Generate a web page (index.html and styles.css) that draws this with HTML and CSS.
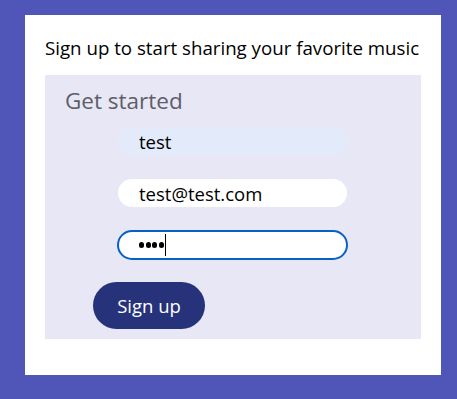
FILE: index.html
```html
<!DOCTYPE html>
<html>
<head>
<meta charset="utf-8">
<link rel="stylesheet" href="styles.css">
</head>
<body>
<div class="card">
  <p class="intro">Sign up to start sharing your favorite music</p>
  <form class="panel">
    <h2 class="title">Get started</h2>
    <div class="fields">
      <input class="field autofill" type="text" value="test">
      <input class="field" type="email" value="test@test.com">
      <div class="field focus"><span class="dot"></span><span class="dot"></span><span class="dot"></span><span class="dot"></span><span class="caret"></span></div>
    </div>
    <button class="btn" type="button">Sign up</button>
  </form>
</div>
</body>
</html>
```
FILE: styles.css
```css
html, body {
  margin: 0;
  padding: 0;
}
body {
  background: #5055b8;
  width: 457px;
  height: 399px;
  overflow: hidden;
  font-family: "Open Sans", "Noto Sans", sans-serif;
}
.card {
  background: #ffffff;
  margin: 15px 0 0 25px;
  width: 416px;
  height: 360px;
  box-sizing: border-box;
  padding: 20px 20px 0 20px;
}
.intro {
  margin: 0 0 14px 0;
  font-size: 18.7px;
  line-height: 26px;
  color: #000;
  white-space: nowrap;
}
.panel {
  background: #e8e7f5;
  height: 264px;
  box-sizing: border-box;
  padding: 11px 0 0 20px;
  display: flex;
  flex-direction: column;
}
.title {
  margin: 0;
  font-weight: 400;
  font-size: 22.5px;
  line-height: 30px;
  color: #5e5e68;
}
.fields {
  margin: 11px 0 0 53px;
  display: flex;
  flex-direction: column;
  gap: 24px;
}
.field {
  width: 229px;
  height: 28px;
  box-sizing: border-box;
  border: none;
  border-radius: 14px;
  background: #fff;
  padding: 0 0 0 21px;
  font-family: "Open Sans", "Noto Sans", sans-serif;
  font-size: 18.5px;
  color: #000;
  outline: none;
  margin: 0;
}
.autofill {
  background: #e3ebfb;
}
.focus {
  height: 30px;
  margin-top: -1px;
  width: 231px;
  margin-left: -1px;
  border: 2px solid #0761c5;
  border-radius: 15px;
  display: flex;
  align-items: center;
  padding-left: 20px;
  gap: 1.4px;
}
.dot {
  width: 5.2px;
  height: 5.2px;
  border-radius: 50%;
  background: #000;
}
.caret {
  width: 1px;
  height: 22px;
  background: #000;
  margin-left: -0.5px;
}
.btn {
  margin: 22px 0 0 28px;
  width: 112px;
  height: 47px;
  border: none;
  border-radius: 24px;
  background: #263279;
  color: #fff;
  font-family: "Open Sans", "Noto Sans", sans-serif;
  font-size: 18.5px;
  font-weight: 500;
  padding: 0;
  cursor: pointer;
}
```
